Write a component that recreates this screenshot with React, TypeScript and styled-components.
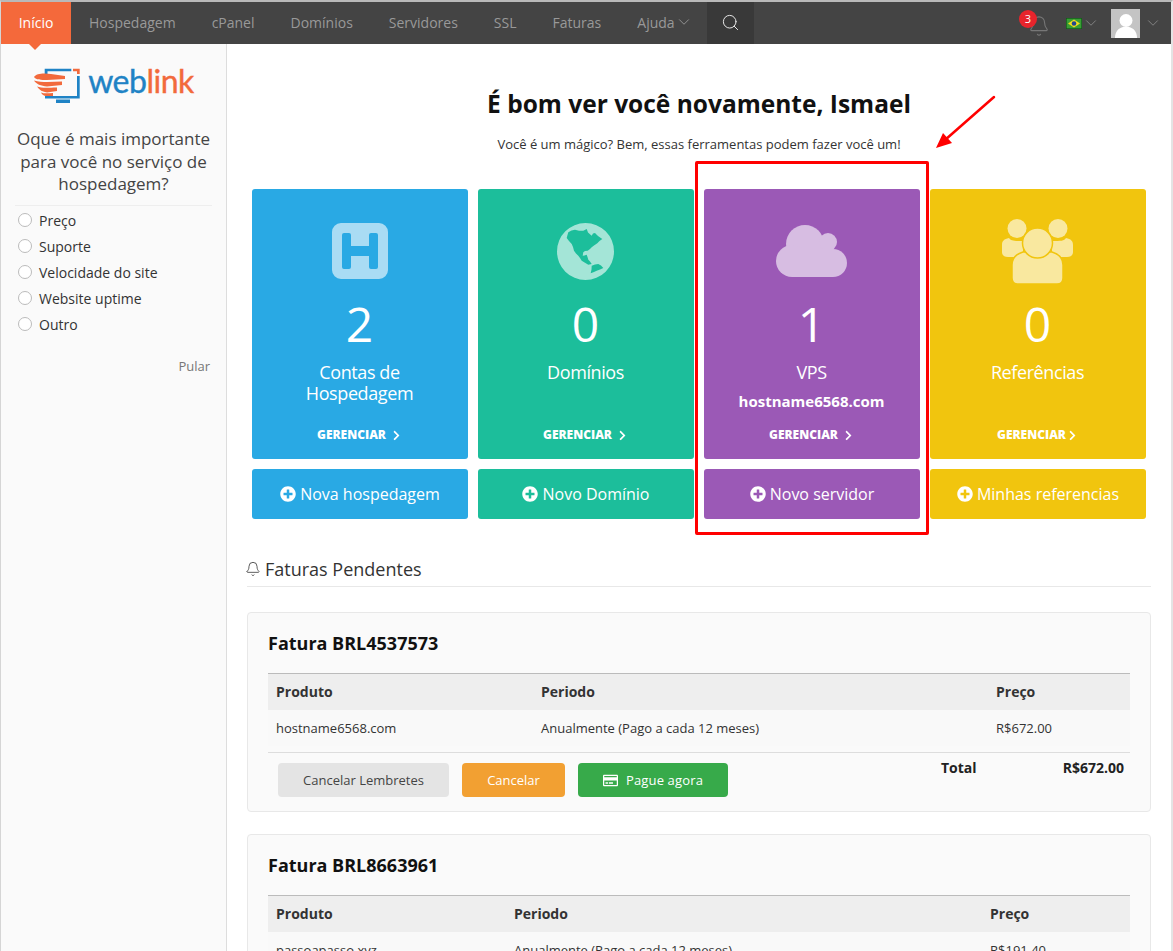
import { createGlobalStyle, styled } from "styled-components";
import { Bell, ChevronDown, Search } from "lucide-react";
import { FaChevronRight, FaPlusCircle, FaRegCreditCard } from "react-icons/fa";

const GlobalStyle = createGlobalStyle`
    html, body {
        margin: 0;
        padding: 0;
        background: #fff;
    }
    body {
        font-family: "Open Sans", "Liberation Sans", sans-serif;
        color: #333;
        font-size: 13px;
    }
    * {
        box-sizing: border-box;
    }
`;

const navItems = ["Hospedagem", "cPanel", "Domínios", "Servidores", "SSL", "Faturas"];
const pollOptions = ["Preço", "Suporte", "Velocidade do site", "Website uptime", "Outro"];

const HostIcon = () => (
    <svg width="56" height="56" viewBox="0 0 56 56">
        <path
            fill="currentColor"
            fillRule="evenodd"
            d="M9 0h38a9 9 0 0 1 9 9v38a9 9 0 0 1-9 9H9a9 9 0 0 1-9-9V9a9 9 0 0 1 9-9zM12 10a2 2 0 0 0-2 2v32a2 2 0 0 0 2 2h5a2 2 0 0 0 2-2V33h18v11a2 2 0 0 0 2 2h5a2 2 0 0 0 2-2V12a2 2 0 0 0-2-2h-5a2 2 0 0 0-2 2v11H19V12a2 2 0 0 0-2-2z"
        />
    </svg>
);

const GlobeIcon = () => (
    <svg width="57" height="57" viewBox="0 0 57 57">
        <path
            fill="currentColor"
            fillRule="evenodd"
            d="M28.500 0a28.500 28.500 0 1 1 0 57a28.500 28.500 0 0 1 0-57zM11.300 9.300L14.500 7.500 18 6.700 22 7.700 26.300 7.700 29.700 6 31 9.500 34.700 12.700 36 10.500 38 10 41 13 45.300 16 42.500 18 40.300 20.300 37 22.500 34.700 24.300 33 26 30.700 27.700 28 28 26.300 29.300 25.700 32.700 27.500 32.500 29.700 31.700 30.500 34 31.300 36.700 33 38.500 34.700 41 31.300 41.700 28 39.700 24.700 37.700 23 35 21.300 32.700 19 30.500 17 27.700 16 24 14.700 21 12 18 9.700 15 10.500 12zM34.700 42.700L38 41.500 41.300 41 44 42.500 46.300 45 43 46.500 39.700 47.700 37 49 33.700 50.300 34.500 46.500z"
        />
    </svg>
);

const CloudIcon = () => (
    <svg width="71" height="52" viewBox="0 0 71 52">
        <g fill="#d7bde2">
            <circle cx="29" cy="19" r="19" />
            <circle cx="52" cy="17" r="9" />
            <circle cx="16" cy="36" r="16" />
            <circle cx="57" cy="38" r="14" />
            <rect x="16" y="24" width="41" height="28" />
        </g>
    </svg>
);

const GroupIcon = () => (
    <svg width="71" height="65" viewBox="0 0 71 65">
        <g fill="#f9e89f">
            <circle cx="15" cy="9.500" r="9.500" />
            <circle cx="56" cy="9.500" r="9.500" />
            <path d="M0 26c0-4 2-6 7-7c2 3 5 3 14 3v16H6c-4 0-6-2-6-5z" />
            <path d="M71 26c0-4-2-6-7-7c-2 3-5 3-14 3v16h15c4 0 6-2 6-5z" />
            <path
                stroke="#f1c50e"
                strokeWidth="1.500"
                d="M10 46c0-7 4-11 11-13h29c7 2 11 6 11 13v13c0 4-2 6-6 6H16c-4 0-6-2-6-6z"
            />
            <circle cx="35.500" cy="24" r="15" stroke="#f1c50e" strokeWidth="1.500" />
        </g>
    </svg>
);

const BrazilFlag = () => (
    <svg width="16" height="11" viewBox="0 0 16 11">
        <rect width="16" height="11" fill="#0f5a18" />
        <rect x="0.700" y="0.700" width="14.600" height="9.600" fill="#3a9e35" />
        <path d="M8 1.500 14 5.500 8 9.500 2 5.500z" fill="#f2dc1f" />
        <circle cx="8" cy="5.500" r="2.300" fill="#24468f" />
    </svg>
);

const Avatar = () => (
    <svg width="29" height="29" viewBox="0 0 29 29">
        <rect width="29" height="29" fill="#c4c4c4" />
        <circle cx="15" cy="11.500" r="6.500" fill="#fff" />
        <path d="M4 29c0-7 4-10 8-11h6c4 1 8 4 8 11z" fill="#fff" />
    </svg>
);

const Logo = () => (
    <LogoRow>
        <svg width="48" height="36" viewBox="0 0 48 36">
            <path d="M11.700.700H38.300V3.300H14.500V6H11.700zM44 8h2.700v22.500H12V28H44zM23 31.500h14V35H23z" fill="#1f83c5" />
            <path d="M40 .700h6.700V6H44V3.300h-4z" fill="#f26a3c" />
            <path d="M1 9C3 5 12 5 18 6L32 8V11L14 12C8 12 3 12 1 9z" fill="#f26a3c" />
            <path d="M1 12.500C5 14 10 14 14 14L29 13.500V17L14 18.500C8 18 3 16 1 12.500z" fill="#f26a3c" />
            <path d="M4 18.500C8 20 12 20 24 19.500V23L14 24.500C10 24 6 22 4 18.500z" fill="#f26a3c" />
            <path d="M8 24.500C10 25.500 14 25.500 20 25V28H13C11 28 9 26.500 8 24.500z" fill="#f26a3c" />
        </svg>
        <LogoText>
            web<LogoAccent>link</LogoAccent>
        </LogoText>
    </LogoRow>
);

interface StatCardProps {
    color: string;
    icon: React.ReactNode;
    count: number;
    label: React.ReactNode;
    host?: string;
    action: string;
    tightArrow?: boolean;
}

const StatColumn = ({ color, icon, count, label, host, action, tightArrow }: StatCardProps) => (
    <Column>
        <StatCard $color={color}>
            <IconSlot>{icon}</IconSlot>
            <Count>{count}</Count>
            <CardLabel>{label}</CardLabel>
            {host && <HostName>{host}</HostName>}
            <Manage $tight={tightArrow}>
                GERENCIAR <FaChevronRight size={11} />
            </Manage>
        </StatCard>
        <ActionButton $color={color}>
            <FaPlusCircle size={16} />
            {action}
        </ActionButton>
    </Column>
);

interface InvoiceProps {
    title: string;
    columns: string;
    product: string;
    price: string;
}

const Invoice = ({ title, columns, product, price }: InvoiceProps) => (
    <InvoiceCard>
        <InvoiceTitle>{title}</InvoiceTitle>
        <TableHead $columns={columns}>
            <span>Produto</span>
            <span>Periodo</span>
            <span>Preço</span>
        </TableHead>
        <TableRow $columns={columns}>
            <span>{product}</span>
            <span>Anualmente (Pago a cada 12 meses)</span>
            <span>{price}</span>
        </TableRow>
        <InvoiceFooter>
            <FooterButtons>
                <GreyButton>Cancelar Lembretes</GreyButton>
                <OrangeButton>Cancelar</OrangeButton>
                <GreenButton>
                    <FaRegCreditCard size={15} />
                    Pague agora
                </GreenButton>
            </FooterButtons>
            <Totals>
                <span>Total</span>
                <span>{price}</span>
            </Totals>
        </InvoiceFooter>
    </InvoiceCard>
);

const App = () => {
    return (
        <Page>
            <GlobalStyle />
            <TopBar>
                <ActiveTab>Início</ActiveTab>
                {navItems.map((item) => (
                    <NavItem key={item}>{item}</NavItem>
                ))}
                <HelpItem>
                    Ajuda
                    <ChevronDown size={18} strokeWidth={1.2} />
                </HelpItem>
                <SearchTab>
                    <Search size={19} strokeWidth={1.2} />
                </SearchTab>
                <TopRight>
                    <BellWrap>
                        <Bell size={22} strokeWidth={1.2} />
                        <Badge>3</Badge>
                    </BellWrap>
                    <FlagWrap>
                        <BrazilFlag />
                        <ChevronDown size={18} strokeWidth={1.2} />
                    </FlagWrap>
                    <UserWrap>
                        <Avatar />
                        <ChevronDown size={18} strokeWidth={1.2} />
                    </UserWrap>
                </TopRight>
            </TopBar>
            <Body>
                <Sidebar>
                    <Logo />
                    <PollTitle>Oque é mais importante para você no serviço de hospedagem?</PollTitle>
                    <PollList>
                        {pollOptions.map((option) => (
                            <PollOption key={option}>
                                <Radio />
                                {option}
                            </PollOption>
                        ))}
                    </PollList>
                    <SkipLink>Pular</SkipLink>
                </Sidebar>
                <Main>
                    <Welcome>É bom ver você novamente, Ismael</Welcome>
                    <Tagline>Você é um mágico? Bem, essas ferramentas podem fazer você um!</Tagline>
                    <CardGrid>
                        <StatColumn color="#29a9e4" icon={<HostIcon />} count={2} label={<>Contas de<br />Hospedagem</>} action="Nova hospedagem" />
                        <StatColumn color="#1cbe9b" icon={<GlobeIcon />} count={0} label="Domínios" action="Novo Domínio" />
                        <StatColumn color="#9b59b6" icon={<CloudIcon />} count={1} label="VPS" host="hostname6568.com" action="Novo servidor" />
                        <StatColumn color="#f1c50e" icon={<GroupIcon />} count={0} label="Referências" action="Minhas referencias" tightArrow />
                    </CardGrid>
                    <SectionTitle>
                        <Bell size={16} strokeWidth={1.2} />
                        Faturas Pendentes
                    </SectionTitle>
                    <Invoice title="Fatura BRL4537573" columns="265px 455px 1fr" product="hostname6568.com" price="R$672.00" />
                    <Invoice title="Fatura BRL8663961" columns="238px 476px 1fr" product="passoapasso.xyz" price="R$191.40" />
                </Main>
            </Body>
            <Highlight />
            <Arrow width="64" height="56" viewBox="0 0 64 56">
                <path d="M60 2 11 45" stroke="#f00" strokeWidth="2.500" strokeLinecap="round" fill="none" />
                <path d="M2 53 9 38 18 48z" fill="#f00" />
            </Arrow>
        </Page>
    );
};

export default App;

const Page = styled.div`
    position: relative;
    height: 951px;
    overflow: hidden;
    border-top: 2px solid #b9b9b9;
    border-left: 1px solid #d5d5d5;
    border-right: 2px solid #e4e4e4;
`;

const TopBar = styled.header`
    display: flex;
    height: 42px;
    background: #444;
    color: #999;
    font-size: 14px;
`;

const ActiveTab = styled.div`
    position: relative;
    display: flex;
    align-items: center;
    justify-content: center;
    width: 70px;
    padding-bottom: 2px;
    background: #f4693b;
    color: #fff;

    &::after {
        content: "";
        position: absolute;
        left: 28px;
        top: 100%;
        border-left: 6px solid transparent;
        border-right: 6px solid transparent;
        border-top: 6px solid #f4693b;
    }
`;

const NavItem = styled.div`
    display: flex;
    align-items: center;
    padding: 0 18px 2px;
`;

const HelpItem = styled(NavItem)`
    padding-right: 14px;
`;

const SearchTab = styled.div`
    display: flex;
    align-items: center;
    justify-content: center;
    width: 47px;
    padding-bottom: 2px;
    background: #393939;
    color: #eee;
`;

const TopRight = styled.div`
    display: flex;
    align-items: center;
    margin-left: auto;
    color: #888;
`;

const BellWrap = styled.div`
    position: relative;
    display: flex;
    margin: 6px 16px 0 0;
    color: #777;
`;

const Badge = styled.span`
    position: absolute;
    left: -9px;
    top: -5px;
    width: 18px;
    height: 18px;
    border-radius: 50%;
    background: #e8242c;
    color: #fff;
    font-size: 11px;
    line-height: 18px;
    text-align: center;
`;

const FlagWrap = styled.div`
    display: flex;
    align-items: center;
    margin-right: 11px;
`;

const UserWrap = styled.div`
    display: flex;
    align-items: center;
    gap: 4px;
    margin-right: 9px;
`;

const Body = styled.div`
    display: flex;
`;

const Sidebar = styled.aside`
    flex: none;
    width: 226px;
    height: 907px;
    padding: 24px 16px 0;
    background: #fafafa;
    border-right: 1px solid #ddd;
`;

const LogoRow = styled.div`
    display: flex;
    align-items: center;
    justify-content: center;
    gap: 7px;
    height: 36px;
`;

const LogoText = styled.span`
    margin-bottom: 10px;
    font-family: "Lato", "Open Sans", sans-serif;
    font-size: 32px;
    line-height: 1;
    letter-spacing: -0.5px;
    color: #1f83c5;
    -webkit-text-stroke: 0.4px currentColor;
`;

const LogoAccent = styled.span`
    color: #f26a3c;
`;

const PollTitle = styled.h3`
    margin: 24px -2px 0;
    padding-bottom: 9.5px;
    border-bottom: 1px solid #eee;
    font-size: 17px;
    font-weight: 400;
    line-height: 22.5px;
    text-align: center;
    color: #444;
`;

const PollList = styled.div`
    display: flex;
    flex-direction: column;
    gap: 6px;
    margin-top: 4px;
`;

const PollOption = styled.label`
    display: flex;
    align-items: center;
    gap: 7px;
    height: 20px;
    padding-left: 1px;
    font-size: 14px;
    color: #333;
`;

const Radio = styled.span`
    width: 14px;
    height: 14px;
    border: 1px solid #bbb;
    border-radius: 50%;
    background: #fff;
`;

const SkipLink = styled.div`
    margin-top: 23px;
    font-size: 13px;
    text-align: right;
    color: #777;
`;

const Main = styled.main`
    flex: 1;
    padding: 0 20px;
`;

const Welcome = styled.h1`
    margin: 43px 0 0;
    font-size: 24.5px;
    font-weight: 700;
    line-height: 33px;
    text-align: center;
    color: #111;
`;

const Tagline = styled.p`
    margin: 15px 0 0;
    font-size: 13px;
    line-height: 18px;
    text-align: center;
    color: #333;
`;

const CardGrid = styled.div`
    display: grid;
    grid-template-columns: repeat(4, 216px);
    gap: 10px;
    margin: 36px 0 0 5px;
`;

const Column = styled.div`
    display: flex;
    flex-direction: column;
    gap: 10px;
`;

const StatCard = styled.div<{ $color: string }>`
    display: flex;
    flex-direction: column;
    align-items: center;
    position: relative;
    height: 270px;
    padding: 34px 1px 0 0;
    border-radius: 3px;
    background: ${(p) => p.$color};
    color: #fff;
`;

const IconSlot = styled.div`
    display: flex;
    align-items: center;
    justify-content: center;
    height: 56px;
    color: rgba(255, 255, 255, 0.6);
`;

const Count = styled.div`
    margin-top: 12px;
    font-size: 48px;
    line-height: 66px;
`;

const CardLabel = styled.div`
    margin-top: 5px;
    font-size: 18px;
    line-height: 21px;
    text-align: center;
    letter-spacing: -0.4px;
`;

const HostName = styled.div`
    margin-top: 8px;
    font-size: 15px;
    font-weight: 700;
    line-height: 20px;
`;

const Manage = styled.div<{ $tight?: boolean }>`
    position: absolute;
    bottom: 15px;
    display: flex;
    align-items: center;
    gap: ${(p) => (p.$tight ? "1px" : "5px")};
    font-size: 12px;
    font-weight: 800;
    line-height: 18px;
`;

const ActionButton = styled.div<{ $color: string }>`
    display: flex;
    align-items: center;
    justify-content: center;
    gap: 4px;
    height: 50px;
    border-radius: 3px;
    background: ${(p) => p.$color};
    color: #fff;
    font-size: 16px;
`;

const SectionTitle = styled.h2`
    display: flex;
    align-items: center;
    gap: 4px;
    height: 32px;
    margin: 36px 0 25px;
    padding-bottom: 4px;
    border-bottom: 1px solid #e8e8e8;
    font-size: 18px;
    font-weight: 400;
    color: #333;

    svg {
        margin-left: -2px;
    }
`;

const InvoiceCard = styled.section`
    height: 200px;
    margin-bottom: 22px;
    padding: 19px 20px 20px;
    border: 1px solid #e8e8e8;
    border-radius: 4px;
    background: #fafafa;
`;

const InvoiceTitle = styled.h3`
    margin: 0 0 19px;
    font-size: 18px;
    font-weight: 700;
    line-height: 22px;
    color: #111;
`;

const TableHead = styled.div<{ $columns: string }>`
    display: grid;
    grid-template-columns: ${(p) => p.$columns};
    align-items: center;
    height: 37px;
    padding: 0 0 2px 8px;
    border-top: 1px solid #bbb;
    background: #eee;
    font-size: 14px;
    font-weight: 700;
    color: #333;
`;

const TableRow = styled.div<{ $columns: string }>`
    display: grid;
    grid-template-columns: ${(p) => p.$columns};
    align-items: center;
    height: 36px;
    padding-left: 8px;
    background: #f9f9f9;
    font-size: 13px;
    color: #333;
`;

const InvoiceFooter = styled.div`
    display: flex;
    justify-content: space-between;
    margin-top: 6px;
    padding: 10px 6px 0 10px;
    border-top: 1px solid #ddd;
`;

const FooterButtons = styled.div`
    display: flex;
    gap: 13px;
`;

const FooterButton = styled.div`
    display: flex;
    align-items: center;
    justify-content: center;
    height: 34px;
    border-radius: 4px;
    font-size: 13px;
`;

const GreyButton = styled(FooterButton)`
    width: 171px;
    background: #e4e4e4;
    color: #444;
`;

const OrangeButton = styled(FooterButton)`
    width: 103px;
    background: #f2a032;
    color: #fff;
`;

const GreenButton = styled(FooterButton)`
    gap: 8px;
    width: 150px;
    background: #37aa4a;
    color: #fff;
    letter-spacing: 0.15px;
`;

const Totals = styled.div`
    display: flex;
    justify-content: space-between;
    width: 183px;
    font-size: 14px;
    font-weight: 700;
    line-height: 10px;
    color: #222;
`;

const Highlight = styled.div`
    position: absolute;
    left: 694px;
    top: 159px;
    width: 234px;
    height: 374px;
    border: 3px solid #f00;
    border-radius: 2px;
    pointer-events: none;
`;

const Arrow = styled.svg`
    position: absolute;
    left: 933px;
    top: 93px;
    pointer-events: none;
`;
